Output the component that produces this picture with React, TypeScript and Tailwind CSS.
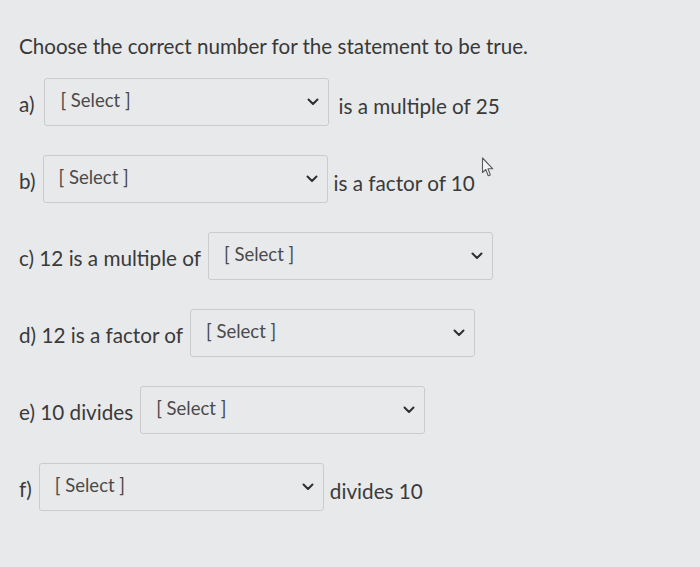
import React from "react";

function Chevron() {
  return (
    <svg width="12" height="8" viewBox="0 0 12 8" className="shrink-0">
      <path d="M1.5 1.5 L6 6 L10.5 1.5" fill="none" stroke="#2f2f2f" strokeWidth="2" strokeLinecap="round" strokeLinejoin="round" />
    </svg>
  );
}

function SelectBox() {
  return (
    <div className="w-[285px] h-[48px] border border-[#c9cbcd] rounded-[3px] flex items-start justify-between pl-[15px] pr-[9px] pt-[9px] shrink-0">
      <span className="text-[18.5px] text-[#4a4a4a] leading-[24px]">[ Select ]</span>
      <span className="pt-[10px]">
        <Chevron />
      </span>
    </div>
  );
}

function Row({ before, after, wide }: { before: string; after?: string; wide?: boolean }) {
  return (
    <div className={"flex items-center h-[48px] " + (wide ? "gap-[10px]" : "gap-[7px]")}>
      <span className="text-[20.7px] text-[#3a3a3a] leading-none pt-[4px]">{before}</span>
      <SelectBox />
      {after && <span className="text-[20.7px] text-[#3a3a3a] leading-none pt-[8px] -ml-px">{after}</span>}
    </div>
  );
}

export default function App() {
  return (
    <div
      className="relative w-[700px] h-[567px] bg-[#e7e9ea] pl-[19px] pt-[32px]"
      style={{ fontFamily: "Lato, 'Open Sans', sans-serif" }}
    >
      <h1 className="text-[20.6px] leading-[28px] text-[#383838] mb-[18px]">
        Choose the correct number for the statement to be true.
      </h1>
      <div className="flex flex-col gap-[29px]">
        <Row before="a)" after="is a multiple of 25" wide />
        <Row before="b)" after="is a factor of 10" />
        <Row before="c) 12 is a multiple of" />
        <Row before="d) 12 is a factor of" />
        <Row before="e) 10 divides" />
        <Row before="f)" after="divides 10" />
      </div>
      <svg className="absolute left-[481px] top-[157px]" width="14" height="21" viewBox="0 0 14 21">
        <path d="M1.5 1 L1.5 15.5 L4.8 12.5 L7.2 18.8 L9.3 17.9 L7 11.8 L11.8 11.8 Z" fill="#f4f5f6" stroke="#5a5a5a" strokeWidth="1.1" strokeLinejoin="round" />
      </svg>
    </div>
  );
}
